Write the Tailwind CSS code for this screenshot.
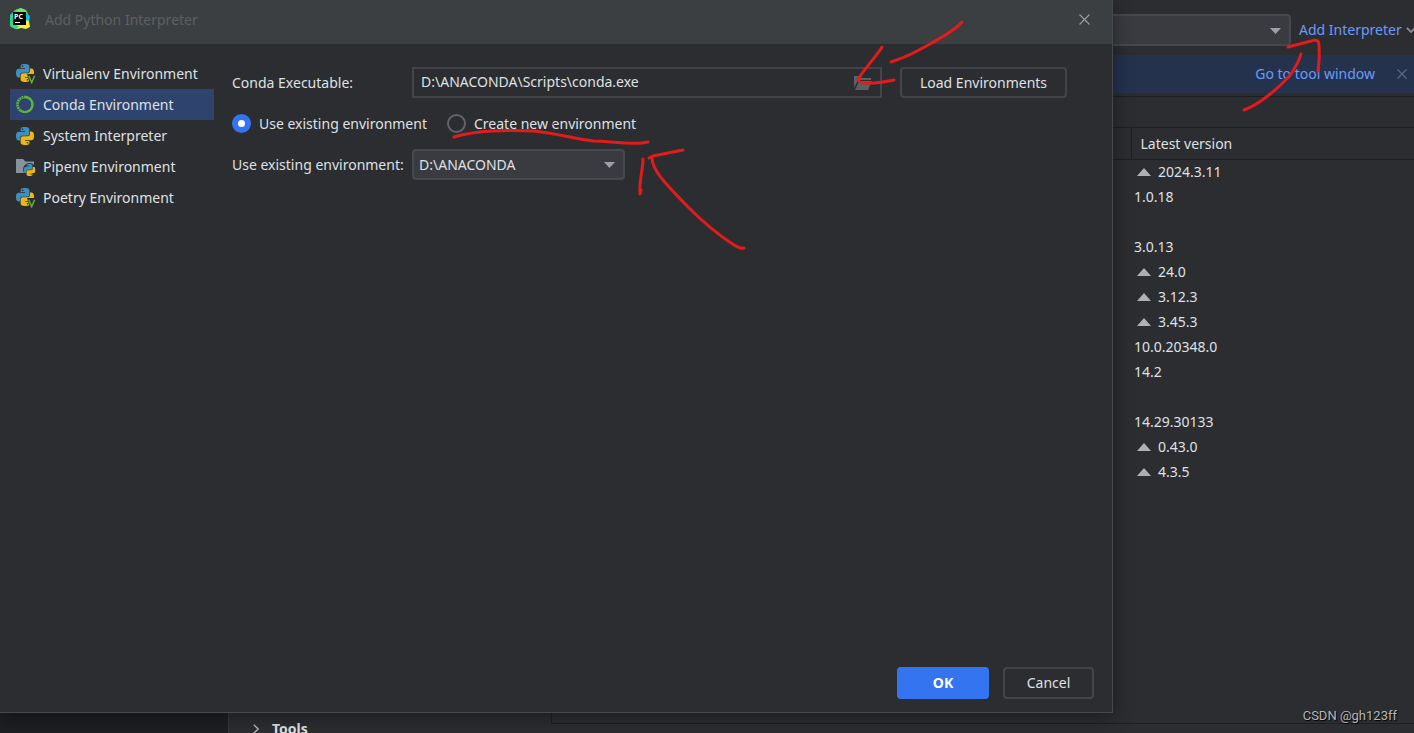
<!DOCTYPE html>
<html lang="en">
  <head>
    <meta charset="UTF-8" />
    <meta name="viewport" content="width=device-width, initial-scale=1.0" />
    <title>Add Python Interpreter</title>
    <script src="https://cdn.jsdelivr.net/npm/@tailwindcss/browser@4"></script>
  </head>
  <body
    class="relative h-screen overflow-hidden bg-[#2b2d30] font-['Noto_Sans','Open_Sans',sans-serif] text-sm text-[#dfe1e5]">
    <!-- shared icons -->
    <svg class="hidden">
      <symbol id="snake" viewBox="0 0 24 24">
        <path
          d="M14.25.18l.9.2.73.26.59.3.45.32.34.34.25.34.16.33.1.3.04.26.02.2-.01.13V8.5l-.05.63-.13.55-.21.46-.26.38-.3.31-.33.25-.35.19-.35.14-.33.1-.3.07-.26.04-.21.02H8.77l-.69.05-.59.14-.5.22-.41.27-.33.32-.27.35-.2.36-.15.37-.1.35-.07.32-.04.27-.02.21v3.06H3.17l-.21-.03-.28-.07-.32-.12-.35-.18-.36-.26-.36-.36-.35-.46-.32-.59-.28-.73-.21-.88-.14-1.05-.05-1.23.06-1.22.16-1.04.24-.87.32-.71.36-.57.4-.44.42-.33.42-.24.4-.16.36-.1.32-.05.24-.01h.16l.06.01h8.16v-.83H6.18l-.01-2.75-.02-.37.05-.34.11-.31.17-.28.25-.26.31-.23.38-.2.44-.18.51-.15.58-.12.64-.1.71-.06.77-.04.84-.02 1.27.05zm-6.3 1.98l-.23.33-.08.41.08.41.23.34.33.22.41.09.41-.09.33-.22.23-.34.08-.41-.08-.41-.23-.33-.33-.22-.41-.09-.41.09z" />
      </symbol>
      <symbol id="python" viewBox="0 0 24 24">
        <use href="#snake" width="24" height="24" fill="#3d8fc0" />
        <use href="#snake" width="24" height="24" fill="#edb80f" transform="rotate(180 12 12)" />
      </symbol>
      <symbol id="python-v" viewBox="0 0 20 20">
        <use href="#python" width="18" height="18" />
        <path d="M11 10h9v10h-6z" fill="#2b2d30" />
        <path d="M12.8 11.8l2.9 6.8 2.9-6.8" fill="none" stroke="#5fae3b" stroke-width="1.5" />
      </symbol>
      <symbol id="up" viewBox="0 0 14 8">
        <path d="M7 0l7 8H0z" fill="#afb1b3" />
      </symbol>
      <symbol id="down" viewBox="0 0 11 6">
        <path d="M0 0h11L5.500 6z" fill="#9da0a8" />
      </symbol>
    </svg>

    <!-- settings window -->
    <div class="flex h-full">
      <div class="w-[228px] shrink-0 bg-[#1e1f22]"></div>
      <aside class="flex w-[323px] shrink-0 flex-col justify-end border-l border-[#393b40]">
        <button class="-mb-1.5 flex h-5 items-center gap-[13px] pl-6 font-bold">
          <svg class="h-2.5 w-1.5" viewBox="0 0 6 10" fill="none" stroke="#b4b8bf" stroke-width="1.3">
            <path d="M.7.7L5.200 5 .7 9.300" />
          </svg>
          Tools
        </button>
      </aside>
      <main class="flex min-w-0 flex-1 flex-col">
        <div class="flex h-[55px] shrink-0 items-center gap-2 pt-1">
          <div class="relative min-w-0 flex-1">
            <select
              aria-label="Python interpreter"
              class="block h-8 w-full appearance-none rounded border-2 border-[#46484d] bg-[#393b40] px-2"></select>
            <svg class="pointer-events-none absolute top-3.5 right-2.5 h-1.5 w-[11px]"><use href="#down" /></svg>
          </div>
          <button class="flex w-[115px] items-center gap-1 whitespace-nowrap text-[#6b9bfa]">
            Add Interpreter
            <svg class="h-1.5 w-2.5 shrink-0" viewBox="0 0 10 6" fill="none" stroke="#868a91" stroke-width="1.8">
              <path d="M.8.8L5 5 9.200.8" />
            </svg>
          </button>
        </div>
        <div class="flex h-[38px] shrink-0 items-center justify-end gap-[22px] bg-[#25324d] pr-[7px]">
          <a href="#" class="text-[#6b9bfa]">Go to tool window</a>
          <button aria-label="Dismiss">
            <svg class="size-2.5" viewBox="0 0 10 10" stroke="#5a6880" stroke-width="1.2">
              <path d="M.5.5l9 9M9.500.5l-9 9" />
            </svg>
          </button>
        </div>
        <div class="mt-[3px] mb-[9px] flex-1 border-y border-l border-[#1e1f22]">
          <div class="h-[31px] border-b border-[#1e1f22]"></div>
          <table class="w-full table-fixed border-collapse text-left">
            <thead>
              <tr class="h-[31px] border-b border-[#1e1f22]">
                <th></th>
                <th class="w-[283px] border-l border-[#1e1f22] pt-px pl-[9px] font-normal">Latest version</th>
              </tr>
            </thead>
            <tbody id="packages"></tbody>
          </table>
        </div>
      </main>
    </div>
    <p class="absolute right-[17px] bottom-[7px] font-['Roboto',sans-serif] text-[13px] leading-5 text-[#b5b6b8] [text-shadow:1px_1px_1px_#000]">
      CSDN @gh123ff
    </p>

    <!-- dialog -->
    <div
      role="dialog"
      aria-labelledby="dialog-title"
      class="absolute top-0 right-[301px] bottom-5 left-0 flex flex-col border-r border-b border-[#46484b] bg-[#2b2d30] shadow-[0_4px_18px_rgba(0,0,0,0.4)]">
      <header class="flex h-11 shrink-0 items-center bg-[#3c3f41] pr-[22px] pl-[9px]">
        <svg class="mb-1.5 size-[22px]" viewBox="0 0 22 22">
          <path d="M1 7l5-5 6-2 3 3-3 17-6 1-5-3z" fill="#21d789" />
          <path d="M7 2l5-2 5 2 2 4-9 3z" fill="#6be85e" />
          <path d="M17 5l4 3-1 6-4-2z" fill="#07c3f2" />
          <path d="M17 12l3 1 1 6-4 2-5-1-4 1-4-2 3-3z" fill="#f5ec4c" />
          <path d="M1 14l5 1 4 4-3 2-5-2z" fill="#35db7c" />
          <rect x="4" y="4" width="13" height="13" />
          <rect x="6" y="14" width="5" height="1" fill="#fff" />
          <text x="5" y="11" fill="#fff" font-size="7" font-weight="bold" font-family="Open Sans">PC</text>
        </svg>
        <h1 id="dialog-title" class="mb-1 ml-3.5 flex-1 text-[#5d6062]">Add Python Interpreter</h1>
        <button aria-label="Close" class="mb-1.5">
          <svg class="size-[11px]" viewBox="0 0 11 11" stroke="#9c9ea0" stroke-width="1.1">
            <path d="M.5.5l10 10M10.500.5l-10 10" />
          </svg>
        </button>
      </header>

      <div class="flex flex-1">
        <nav class="w-[214px] shrink-0 pt-3.5 pl-2.5">
          <ul>
            <li>
              <button class="flex h-[31px] w-full items-center gap-[7px] pl-1.5">
                <svg class="size-5"><use href="#python-v" /></svg>Virtualenv Environment
              </button>
            </li>
            <li>
              <button class="flex h-[31px] w-full items-center gap-[7px] bg-[#2e436e] pl-1.5">
                <svg class="size-5" viewBox="0 0 20 20" fill="none" stroke="#5fb33e">
                  <path d="M9 2a7.500 7.500 0 1 1-4.500 13.500" stroke-width="2.300" />
                  <path d="M4.500 15.500A7.500 7.500 0 0 1 9 2" stroke-width="2.800" stroke-dasharray="1.800 .7" />
                </svg>Conda Environment
              </button>
            </li>
            <li>
              <button class="flex h-[31px] w-full items-center gap-[7px] pl-1.5">
                <svg class="size-5" viewBox="0 0 20 20"><use href="#python" width="18" height="18" y="1" /></svg>System Interpreter
              </button>
            </li>
            <li>
              <button class="flex h-[31px] w-full items-center gap-[7px] pl-1.5">
                <svg class="size-5" viewBox="0 0 20 20">
                  <path d="M0 2h7l2.500 2.500H18V16H0z" fill="#87939a" />
                  <circle cx="13.500" cy="12.500" r="6.500" fill="#2b2d30" />
                  <use href="#python" x="7.500" y="7" width="12" height="12" />
                </svg>Pipenv Environment
              </button>
            </li>
            <li>
              <button class="flex h-[31px] w-full items-center gap-[7px] pl-1.5">
                <svg class="size-5"><use href="#python-v" /></svg>Poetry Environment
              </button>
            </li>
          </ul>
        </nav>

        <form class="flex flex-1 flex-col gap-2.5 pt-[23px] pr-[45px] pl-[18px]">
          <div class="flex h-[31px] items-center">
            <label for="conda" class="w-[180px]">Conda Executable:</label>
            <div class="relative flex-1">
              <input
                id="conda"
                type="text"
                value="D:\ANACONDA\Scripts\conda.exe"
                class="block h-[31px] w-full border-2 border-[#43454a] bg-transparent pr-8 pb-0.5 pl-[7px]" />
              <button type="button" aria-label="Browse" class="absolute top-[9px] right-2.5">
                <svg class="block h-3.5 w-[18px]" viewBox="0 0 18 14" fill="#596166">
                  <path d="M0 0h6l2 2h9v2H4L0 12z" />
                  <path d="M5 5h13l-4 9H1z" />
                </svg>
              </button>
            </div>
            <button type="button" class="ml-[18px] h-[31px] w-[167px] rounded border-2 border-[#43454a]">
              Load Environments
            </button>
          </div>
          <div class="flex h-[31px] items-center gap-5">
            <label class="flex items-center gap-2">
              <input
                type="radio"
                name="env"
                checked
                class="size-[19px] appearance-none rounded-full border-2 border-[#5f6269] checked:border-[6px] checked:border-[#3574f0] checked:bg-white" />
              Use existing environment
            </label>
            <label class="flex items-center gap-2">
              <input
                type="radio"
                name="env"
                class="size-[19px] appearance-none rounded-full border-2 border-[#5f6269] checked:border-[6px] checked:border-[#3574f0] checked:bg-white" />
              Create new environment
            </label>
          </div>
          <div class="flex h-[31px] items-center">
            <label for="existing" class="w-[180px]">Use existing environment:</label>
            <div class="relative w-[213px]">
              <select
                id="existing"
                class="block h-[31px] w-full appearance-none rounded border-2 border-[#46484d] bg-[#393b40] px-[5px]">
                <option>D:\ANACONDA</option>
              </select>
              <svg class="pointer-events-none absolute top-[13px] right-2.5 h-1.5 w-[11px]"><use href="#down" /></svg>
            </div>
          </div>
        </form>
      </div>

      <footer class="flex justify-end gap-3.5 pr-[18px] pb-[13px]">
        <button class="h-8 w-[92px] rounded bg-[#3574f0] font-bold text-white">OK</button>
        <button class="h-8 w-[91px] rounded border-2 border-[#43454a]">Cancel</button>
      </footer>
    </div>

    <!-- pen marks -->
    <svg
      class="pointer-events-none absolute top-0 left-0"
      width="1414"
      height="733"
      fill="none"
      stroke="#e51b1b"
      stroke-width="3"
      stroke-linecap="round"
      stroke-linejoin="round">
      <path d="M962 22C958 27 948 34 930 44S908 56 891 62" />
      <path d="M882 47C876 57 860 74 858 80C860 85 874 84 894 80" />
      <path d="M454 137C478 130 505 130 534 131C560 134 575 139 593 141C612 141 632 146 648 142" />
      <path d="M553 124h.1" stroke-width="2" />
      <path d="M643 159C643 170 639 180 640 194L641 190" />
      <path d="M683 150L653 156L649 158" />
      <path d="M652 158C652 172 672 190 688 207C704 223 720 236 734 245Q740 249 744 248" />
      <path d="M1244 110C1262 104 1290 78 1294 69Q1299 62 1301 54" />
      <path d="M1288 47L1315 40Q1319 40 1319 45Q1320 58 1318 71" />
    </svg>

    <script>
      // null leaves the cell blank, update marks a newer version
      const packages = [
        { version: "2024.3.11", update: true },
        { version: "1.0.18" },
        { version: null },
        { version: "3.0.13" },
        { version: "24.0", update: true },
        { version: "3.12.3", update: true },
        { version: "3.45.3", update: true },
        { version: "10.0.20348.0" },
        { version: "14.2" },
        { version: null },
        { version: "14.29.30133" },
        { version: "0.43.0", update: true },
        { version: "4.3.5", update: true },
      ];

      const arrow =
        '<svg class="mr-[7px] ml-[3px] h-2 w-3.5"><use href="#up" /></svg>';

      document.getElementById("packages").innerHTML = packages
        .map(
          (p) => `<tr class="h-[25px]">
            <td></td>
            <td class="pl-[3px]"><div class="flex items-center">${p.update ? arrow : ""}${p.version || ""}</div></td>
          </tr>`
        )
        .join("");
    </script>
  </body>
</html>
